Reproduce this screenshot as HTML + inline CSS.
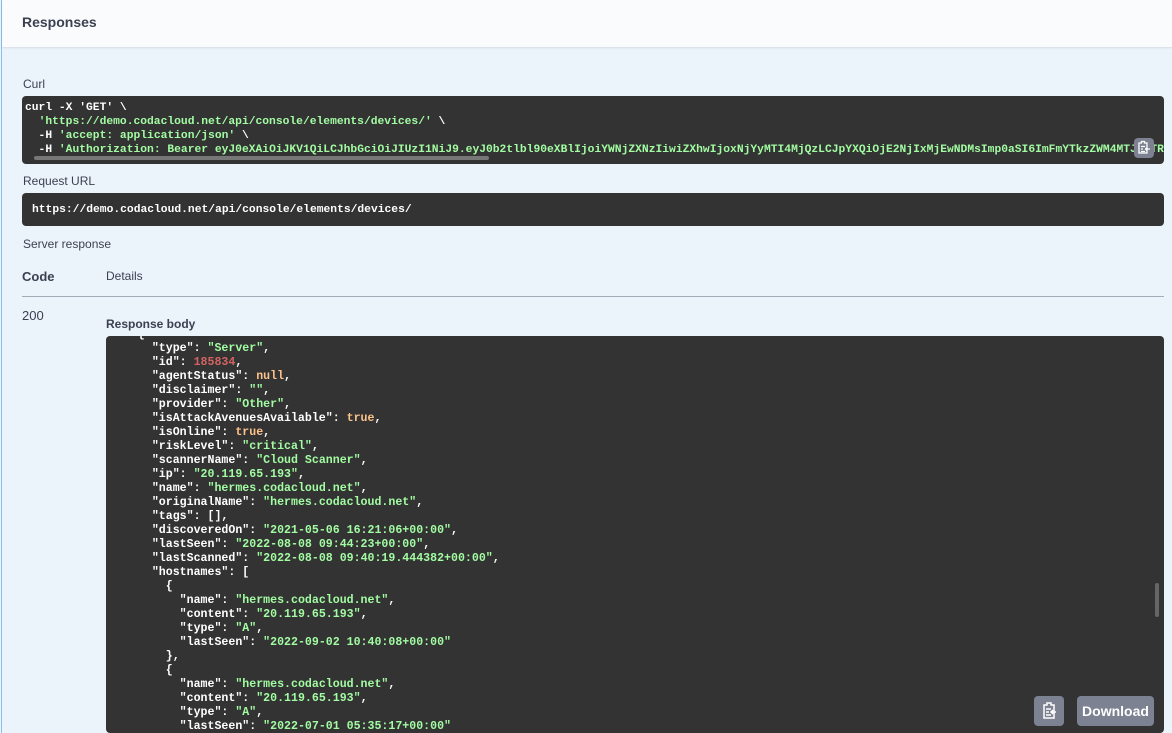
<!DOCTYPE html>
<html style="width:1172px;height:733px;overflow:hidden"><head><meta charset="utf-8"><style>
*{margin:0;padding:0;box-sizing:border-box}
body{width:1172px;height:733px;overflow:hidden;background:#ebf3fb;font-family:"Liberation Sans",Arial,sans-serif;color:#3b4151;position:relative}
.lb{position:absolute;left:1px;top:0;width:1px;height:733px;background:#8cbfee}
.hdr{position:absolute;left:2px;top:0;width:1170px;height:47px;background:#fafbfc;box-shadow:0 1px 2px rgba(0,0,0,.1)}
.hdr b{position:absolute;left:20px;top:14px;font-size:14px;color:#3b4151}
.lbl{position:absolute;font-size:12px;color:#3b4151}
.code{position:absolute;background:#333;border-radius:4px;color:#fff;font-family:"Liberation Mono",monospace;font-weight:bold;white-space:pre;overflow:hidden}
.s{color:#a2fca2}.n{color:#d36363}.k{color:#fcc28c}
.btn{position:absolute;background:#7d8293;border-radius:4px;color:#fff}
</style></head><body>
<div class="lb"></div>
<div class="hdr"><b>Responses</b></div>
<div class="lbl" style="left:23px;top:77px">Curl</div>
<div class="code" style="left:22px;top:96px;width:1142px;height:68px;font-size:11.3px;line-height:14px;padding:5px 0 0 3px">curl -X 'GET' \
  <span class="s">'https://demo.codacloud.net/api/console/elements/devices/'</span> \
  -H <span class="s">'accept: application/json'</span> \
  -H <span class="s">'Authorization: Bearer eyJ0eXAiOiJKV1QiLCJhbGciOiJIUzI1NiJ9.eyJ0b2tlbl90eXBlIjoiYWNjZXNzIiwiZXhwIjoxNjYyMTI4MjQzLCJpYXQiOjE2NjIxMjEwNDMsImp0aSI6ImFmYTkzZWM4MTJjOTRhNDc</span>
<div style="position:absolute;left:12px;top:60px;width:455px;height:4px;background:#777;border-radius:2px"></div>
<div style="position:absolute;left:1112px;top:42px;width:20px;height:20px;background:#7d8293;border-radius:4px"><svg width="20" height="20" viewBox="0 0 20 20"><g fill="none" stroke="#fff" stroke-width="1.3"><path d="M5 5h2.5v-1.5h3v1.5h2.5v10h-8z"/><path d="M7 8.5h4M7 11h2M7 13.5h4M11 11h5M13 9.5l-1.5 1.5 1.5 1.5"/></g></svg></div></div>
<div class="lbl" style="left:23px;top:174px">Request URL</div>
<div class="code" style="left:22px;top:193px;width:1142px;height:33px;font-size:11.3px;line-height:14px;padding:10px 0 0 10px">https://demo.codacloud.net/api/console/elements/devices/</div>
<div class="lbl" style="left:23px;top:237px">Server response</div>
<div class="lbl" style="left:22px;top:269px;font-size:13px;font-weight:bold">Code</div>
<div class="lbl" style="left:106px;top:269px">Details</div>
<div style="position:absolute;left:22px;top:296px;width:1142px;height:1px;background:#a4abb8"></div>
<div class="lbl" style="left:22px;top:308px;font-size:13px">200</div>
<div class="lbl" style="left:106px;top:317px;font-weight:bold">Response body</div>
<div class="code" style="left:106px;top:336px;width:1058px;height:397px;font-size:11.6px;line-height:14px;padding:0 0 0 18px"><div style="margin-top:-8px">  {
    "type": <span class="s">"Server"</span>,
    "id": <span class="n">185834</span>,
    "agentStatus": <span class="k">null</span>,
    "disclaimer": <span class="s">""</span>,
    "provider": <span class="s">"Other"</span>,
    "isAttackAvenuesAvailable": <span class="k">true</span>,
    "isOnline": <span class="k">true</span>,
    "riskLevel": <span class="s">"critical"</span>,
    "scannerName": <span class="s">"Cloud Scanner"</span>,
    "ip": <span class="s">"20.119.65.193"</span>,
    "name": <span class="s">"hermes.codacloud.net"</span>,
    "originalName": <span class="s">"hermes.codacloud.net"</span>,
    "tags": [],
    "discoveredOn": <span class="s">"2021-05-06 16:21:06+00:00"</span>,
    "lastSeen": <span class="s">"2022-08-08 09:44:23+00:00"</span>,
    "lastScanned": <span class="s">"2022-08-08 09:40:19.444382+00:00"</span>,
    "hostnames": [
      {
        "name": <span class="s">"hermes.codacloud.net"</span>,
        "content": <span class="s">"20.119.65.193"</span>,
        "type": <span class="s">"A"</span>,
        "lastSeen": <span class="s">"2022-09-02 10:40:08+00:00"</span>
      },
      {
        "name": <span class="s">"hermes.codacloud.net"</span>,
        "content": <span class="s">"20.119.65.193"</span>,
        "type": <span class="s">"A"</span>,
        "lastSeen": <span class="s">"2022-07-01 05:35:17+00:00"</span></div>
<div style="position:absolute;left:1049px;top:247px;width:4px;height:34px;background:#666;border-radius:2px"></div></div>
<div class="btn" style="left:1034px;top:696px;width:30px;height:30px"><svg width="30" height="30" viewBox="0 0 30 30"><g fill="none" stroke="#fff" stroke-width="1.5"><path d="M10 9h3v-2h4v2h3v13h-10z"/><path d="M12 13h5M12 16h3M12 19h5M17 16h5M19 14l-2 2 2 2"/></g></svg></div>
<div class="btn" style="left:1077px;top:696px;width:77px;height:30px;font-size:14px;font-weight:bold;line-height:30px;text-align:center">Download</div>
</body></html>
